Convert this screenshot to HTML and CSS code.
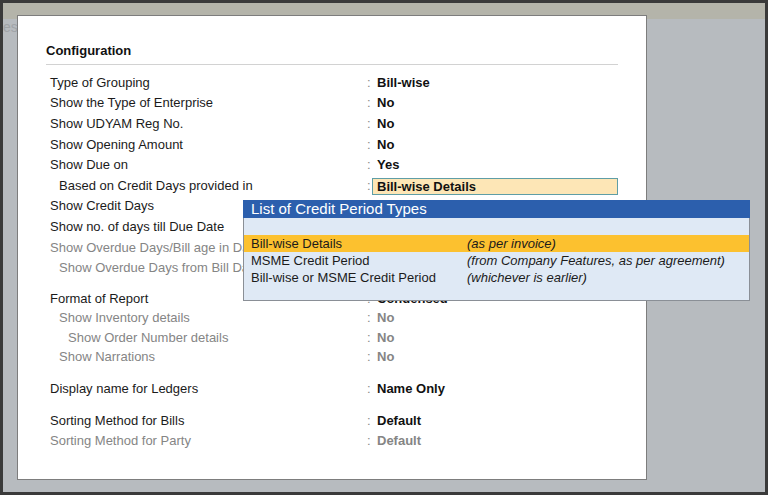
FILE: index.html
```html
<!DOCTYPE html>
<html>
<head>
<meta charset="utf-8">
<title>Configuration</title>
<link rel="stylesheet" href="styles.css">
</head>
<body>
<div class="screen">
  <div class="topstrip"></div>
  <div class="main">
    <div class="gutter"><span class="ghost">es</span></div>
    <div class="panel">
      <div class="title">Configuration</div>
      <div class="list">
        <div class="group g1">
          <div class="row"><span class="lbl">Type of Grouping</span><span class="colon">:</span><span class="val">Bill-wise</span></div>
          <div class="row"><span class="lbl">Show the Type of Enterprise</span><span class="colon">:</span><span class="val">No</span></div>
          <div class="row"><span class="lbl">Show UDYAM Reg No.</span><span class="colon">:</span><span class="val">No</span></div>
          <div class="row"><span class="lbl">Show Opening Amount</span><span class="colon">:</span><span class="val">No</span></div>
          <div class="row"><span class="lbl">Show Due on</span><span class="colon">:</span><span class="val">Yes</span></div>
          <div class="row"><span class="lbl i1">Based on Credit Days provided in</span><span class="colon">:</span><span class="val active">Bill-wise Details</span></div>
          <div class="row"><span class="lbl">Show Credit Days</span><span class="colon"></span><span class="val"></span></div>
          <div class="row"><span class="lbl">Show no. of days till Due Date</span><span class="colon"></span><span class="val"></span></div>
          <div class="row dim"><span class="lbl">Show Overdue Days/Bill age in Days</span><span class="colon"></span><span class="val"></span></div>
          <div class="row dim"><span class="lbl i1">Show Overdue Days from Bill Date</span><span class="colon"></span><span class="val"></span></div>
        </div>
        <div class="group g2">
          <div class="row"><span class="lbl">Format of Report</span><span class="colon">:</span><span class="val">Condensed</span></div>
          <div class="row dim"><span class="lbl i1">Show Inventory details</span><span class="colon">:</span><span class="val">No</span></div>
          <div class="row dim"><span class="lbl i2">Show Order Number details</span><span class="colon">:</span><span class="val">No</span></div>
          <div class="row dim"><span class="lbl i1">Show Narrations</span><span class="colon">:</span><span class="val">No</span></div>
        </div>
        <div class="group g3">
          <div class="row"><span class="lbl">Display name for Ledgers</span><span class="colon">:</span><span class="val">Name Only</span></div>
        </div>
        <div class="group g3">
          <div class="row"><span class="lbl">Sorting Method for Bills</span><span class="colon">:</span><span class="val">Default</span></div>
          <div class="row dim"><span class="lbl">Sorting Method for Party</span><span class="colon">:</span><span class="val">Default</span></div>
        </div>
      </div>

      <div class="popup">
        <div class="popup-head">List of Credit Period Types</div>
        <div class="popup-body">
          <div class="item sel"><span class="name">Bill-wise Details</span><span class="desc">(as per invoice)</span></div>
          <div class="item"><span class="name">MSME Credit Period</span><span class="desc">(from Company Features, as per agreement)</span></div>
          <div class="item"><span class="name">Bill-wise or MSME Credit Period</span><span class="desc">(whichever is earlier)</span></div>
        </div>
      </div>
    </div>
    <div class="rest"></div>
  </div>
</div>
</body>
</html>
```

FILE: styles.css
```css
* { box-sizing: border-box; }

html, body {
  margin: 0;
  padding: 0;
}

body {
  font-family: "Liberation Sans", Arial, sans-serif;
  font-size: 13px;
  color: #1b1b1b;
  background: #3b3b3b;
}

.screen {
  width: 768px;
  height: 495px;
  border: 3px solid #3a3a3a;
  background: #b7bbbf;
  display: flex;
  flex-direction: column;
  overflow: hidden;
}

.topstrip {
  height: 16px;
  background: #b4b4aa;
  flex: none;
}

.main {
  display: flex;
  margin-top: -4px;
  flex: 1;
}

.gutter {
  width: 14px;
  flex: none;
  overflow: hidden;
  padding-top: 4px;
  text-align: right;
  white-space: nowrap;
}

.ghost {
  display: block;
  line-height: 16px;
  font-size: 14px;
  color: #a0a4a8;
}

.panel {
  position: relative;
  width: 630px;
  height: 465px;
  flex: none;
  background: #ffffff;
  border: 1px solid #7d7d7d;
  padding: 27px 28px 0;
}

.rest {
  flex: 1;
}

.title {
  font-weight: bold;
  font-size: 13px;
  line-height: 16px;
  padding-bottom: 5px;
  border-bottom: 1px solid #d2d2d2;
  color: #111;
}

.list {
  margin-top: 7px;
  padding-left: 4px;
}

.g2 {
  margin-top: 10.5px;
}

.g2 + .g3 {
  margin-top: 12px;
}

.g3 + .g3 {
  margin-top: 12px;
}

.row {
  display: grid;
  grid-template-columns: 317px 10px 1fr;
  align-items: center;
  height: 20px;
  white-space: nowrap;
}

.g1 .row { height: 20.6px; }
.g2 .row { height: 19.5px; }

.lbl { overflow: visible; }
.i1 { padding-left: 9px; }
.i2 { padding-left: 18px; }

.colon {
  color: #8a8a8a;
}

.val {
  font-weight: bold;
  color: #111;
}

.val.active {
  margin-left: -5px;
  margin-top: 3px;
  width: 246px;
  height: 17px;
  line-height: 15px;
  padding: 0 4px;
  background: #fde6b6;
  border: 1px solid #5f9ea6;
}

.row.dim .lbl,
.row.dim .val {
  color: #858585;
}

.popup {
  position: absolute;
  left: 225px;
  top: 184px;
  width: 507px;
  height: 101px;
  background: #dfe9f5;
  border: 1px solid #8a8f96;
  border-top: none;
}

.popup-head {
  height: 18px;
  line-height: 18px;
  background: #2c5fad;
  color: #ffffff;
  font-size: 15px;
  margin: 0 -1px;
  padding-left: 8px;
}

.popup-body {
  padding-top: 17px;
}

.item {
  display: grid;
  grid-template-columns: 216px 1fr;
  align-items: center;
  height: 17px;
  padding-left: 7px;
  white-space: nowrap;
  color: #1b1b1b;
}

.item.sel {
  background: #fcc12f;
}

.desc {
  font-style: italic;
}
```
